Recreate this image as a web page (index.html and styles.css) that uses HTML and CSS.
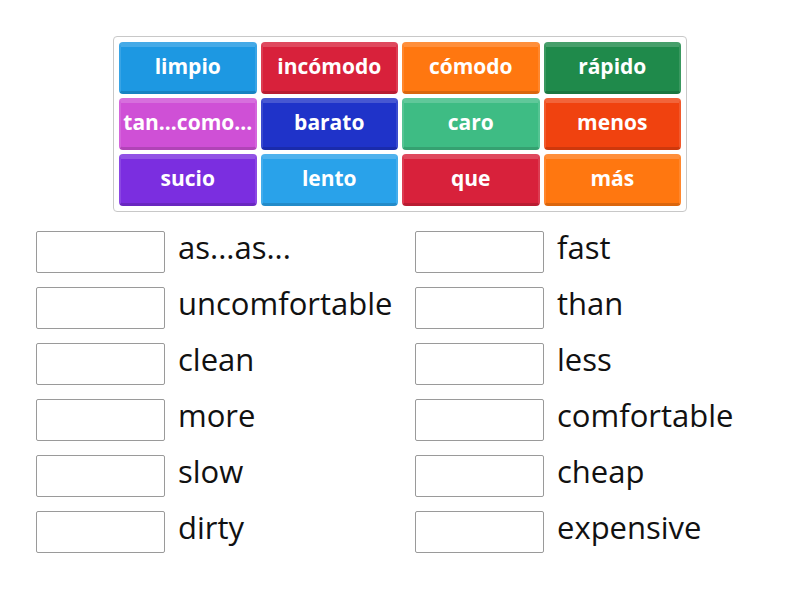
FILE: index.html
```html
<!DOCTYPE html>
<html>
<head>
<meta charset="utf-8">
<link rel="stylesheet" href="styles.css">
</head>
<body>
<div class="page">
  <div class="bank">
    <div class="tile c-sky">limpio</div>
    <div class="tile c-red">incómodo</div>
    <div class="tile c-orange">cómodo</div>
    <div class="tile c-green">rápido</div>
    <div class="tile c-pink">tan...como...</div>
    <div class="tile c-blue">barato</div>
    <div class="tile c-mint">caro</div>
    <div class="tile c-vermilion">menos</div>
    <div class="tile c-purple">sucio</div>
    <div class="tile c-sky2">lento</div>
    <div class="tile c-red">que</div>
    <div class="tile c-orange">más</div>
  </div>
  <div class="answers">
    <div class="col">
      <div class="row"><div class="slot"></div><span class="word">as...as...</span></div>
      <div class="row"><div class="slot"></div><span class="word">uncomfortable</span></div>
      <div class="row"><div class="slot"></div><span class="word">clean</span></div>
      <div class="row"><div class="slot"></div><span class="word">more</span></div>
      <div class="row"><div class="slot"></div><span class="word">slow</span></div>
      <div class="row"><div class="slot"></div><span class="word">dirty</span></div>
    </div>
    <div class="col">
      <div class="row"><div class="slot"></div><span class="word">fast</span></div>
      <div class="row"><div class="slot"></div><span class="word">than</span></div>
      <div class="row"><div class="slot"></div><span class="word">less</span></div>
      <div class="row"><div class="slot"></div><span class="word">comfortable</span></div>
      <div class="row"><div class="slot"></div><span class="word">cheap</span></div>
      <div class="row"><div class="slot"></div><span class="word">expensive</span></div>
    </div>
  </div>
</div>
</body>
</html>
```
FILE: styles.css
```css
* { box-sizing: border-box; }
html, body { margin: 0; padding: 0; background: #fff; }
body { font-family: "Open Sans", "Liberation Sans", sans-serif; color: #111; }
.page { width: 800px; height: 600px; padding-top: 36px; }
.bank {
  margin-left: 113px;
  width: 574px;
  border: 1px solid #c8c8c8;
  border-radius: 4px;
  padding: 5px;
  display: grid;
  grid-template-columns: repeat(4, 1fr);
  gap: 4px;
}
.tile {
  height: 52px;
  border-radius: 4px;
  border-top: 5px solid rgba(255,255,255,0.18);
  border-left: 2px solid rgba(255,255,255,0.12);
  border-right: 2px solid rgba(255,255,255,0.12);
  border-bottom: 3px solid rgba(0,0,0,0.14);
  color: #fff;
  font-weight: 700;
  font-size: 21px;
  display: flex;
  align-items: center;
  justify-content: center;
  white-space: nowrap;
  overflow: hidden;
  padding-bottom: 6px;
}
.c-sky { background: #1d98e2; }
.c-sky2 { background: #29a2ea; }
.c-red { background: #d8213b; }
.c-orange { background: #ff7710; }
.c-green { background: #1f8a4b; }
.c-pink { background: #cf50d6; }
.c-blue { background: #1f33c9; }
.c-mint { background: #3ebc84; }
.c-vermilion { background: #f0420f; }
.c-purple { background: #7b2ee0; }
.answers {
  display: flex;
  margin-top: 19px;
  padding-left: 36px;
}
.col { width: 379px; display: flex; flex-direction: column; gap: 14px; }
.row { display: flex; align-items: center; height: 42px; }
.slot {
  width: 129px;
  height: 42px;
  border: 1px solid #9a9a9a;
  border-radius: 2px;
  flex: none;
}
.word {
  margin-left: 13px;
  font-size: 31px;
  line-height: 42px;
  color: #111;
  position: relative;
  top: -5px;
}
```
